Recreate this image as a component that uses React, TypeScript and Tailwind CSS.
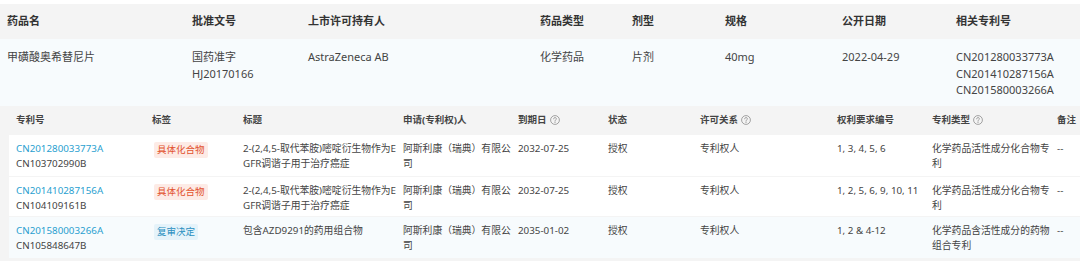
import React from "react";

const FONT = { fontFamily: "'Noto Sans', 'Noto Sans CJK SC', sans-serif" };

function Q() {
  return (
    <svg width="10" height="10" viewBox="0 0 12 12" className="inline-block ml-[3px] -mt-[2px] align-middle">
      <circle cx="6" cy="6" r="5.3" fill="none" stroke="#888" strokeWidth="0.9" />
      <path d="M4.4 4.6a1.6 1.6 0 1 1 2.3 1.45c-.45.22-.7.5-.7 1v.45" fill="none" stroke="#888" strokeWidth="0.9" strokeLinecap="round" />
      <circle cx="6" cy="8.9" r="0.6" fill="#888" />
    </svg>
  );
}

const topCols = "grid grid-cols-[185px_116px_232px_92px_93px_117px_114px_131px]";
const subCols = "grid grid-cols-[136px_91px_160px_115px_90px_92px_137px_95px_125px_30px]";

type Row = {
  a: string; b: string; tag: string; tagType: "red" | "blue"; title: string[]; who: string[];
  exp: string; claims: string; type: string[]; bg: string; h: string;
};

const rows: Row[] = [
  { a: "CN201280033773A", b: "CN103702990B", tag: "具体化合物", tagType: "red", title: ["2-(2,4,5-取代苯胺)嘧啶衍生物作为E", "GFR调谐子用于治疗癌症"], who: ["阿斯利康（瑞典）有限公", "司"], exp: "2032-07-25", claims: "1, 3, 4, 5, 6", type: ["化学药品活性成分化合物专", "利"], bg: "bg-white", h: "h-[41px]" },
  { a: "CN201410287156A", b: "CN104109161B", tag: "具体化合物", tagType: "red", title: ["2-(2,4,5-取代苯胺)嘧啶衍生物作为E", "GFR调谐子用于治疗癌症"], who: ["阿斯利康（瑞典）有限公", "司"], exp: "2032-07-25", claims: "1, 2, 5, 6, 9, 10, 11", type: ["化学药品活性成分化合物专", "利"], bg: "bg-white", h: "h-[39px]" },
  { a: "CN201580003266A", b: "CN105848647B", tag: "复审决定", tagType: "blue", title: ["包含AZD9291的药用组合物"], who: ["阿斯利康（瑞典）有限公", "司"], exp: "2035-01-02", claims: "1, 2 & 4-12", type: ["化学药品含活性成分的药物", "组合专利"], bg: "bg-[#f7fbfd]", h: "h-[41px]" },
];

export default function App() {
  return (
    <div style={FONT} className="w-[1080px] h-[261px] bg-white overflow-hidden text-[#333]">
      <div className="h-[4px]" />
      <div className={`${topCols} h-[35px] bg-[#f4f4f4] items-center text-[11px] font-bold text-[#333]`}>
        {["药品名", "批准文号", "上市许可持有人", "药品类型", "剂型", "规格", "公开日期", "相关专利号"].map((h) => (
          <div key={h} className="pl-[7px]">{h}</div>
        ))}
      </div>
      <div className={`${topCols} h-[67px] bg-[#f7fbfd] pt-[10px] text-[11px] leading-[16.5px] text-[#444]`}>
        <div className="pl-[7px]">甲磺酸奥希替尼片</div>
        <div className="pl-[7px]">国药准字<br />HJ20170166</div>
        <div className="pl-[7px]">AstraZeneca AB</div>
        <div className="pl-[7px]">化学药品</div>
        <div className="pl-[7px]">片剂</div>
        <div className="pl-[7px]">40mg</div>
        <div className="pl-[7px]">2022-04-29</div>
        <div className="pl-[7px]">CN201280033773A<br />CN201410287156A<br />CN201580003266A</div>
      </div>
      <div className="bg-[#f4f4f4] pl-[9px] pb-[4px]">
        <div className={`${subCols} h-[29px] items-center text-[9.5px] font-bold text-[#444]`}>
          <div className="pl-[7px]">专利号</div>
          <div className="pl-[7px]">标签</div>
          <div className="pl-[7px]">标题</div>
          <div className="pl-[7px]">申请(专利权)人</div>
          <div className="pl-[7px]">到期日<Q /></div>
          <div className="pl-[7px]">状态</div>
          <div className="pl-[7px]">许可关系<Q /></div>
          <div className="pl-[7px]">权利要求编号</div>
          <div className="pl-[7px]">专利类型<Q /></div>
          <div className="pl-[7px]">备注</div>
        </div>
        {rows.map((r, i) => (
          <div key={i} className={`${subCols} ${r.bg} ${r.h} pt-[6px] text-[9.8px] leading-[15px] text-[#444] ${i > 0 ? "mt-[1px]" : ""}`}>
            <div className="pl-[7px]"><span className="text-[#2a9fd0]">{r.a}</span><br />{r.b}</div>
            <div className="pl-[9px]">
              <span className={`inline-block px-[3px] mt-[1px] h-[16px] leading-[16px] text-[9.5px] rounded-[2px] ${r.tagType === "red" ? "bg-[#fdebe6] text-[#e2532d]" : "bg-[#e5f3fa] text-[#2a8fc0]"}`}>{r.tag}</span>
            </div>
            <div className="pl-[7px] whitespace-nowrap">{r.title.map((t, j) => <div key={j}>{t}</div>)}</div>
            <div className="pl-[7px] whitespace-nowrap">{r.who.map((t, j) => <div key={j}>{t}</div>)}</div>
            <div className="pl-[7px]">{r.exp}</div>
            <div className="pl-[7px]">授权</div>
            <div className="pl-[7px]">专利权人</div>
            <div className="pl-[7px] whitespace-nowrap">{r.claims}</div>
            <div className="pl-[7px] whitespace-nowrap">{r.type.map((t, j) => <div key={j}>{t}</div>)}</div>
            <div className="pl-[7px]">--</div>
          </div>
        ))}
      </div>
    </div>
  );
}
